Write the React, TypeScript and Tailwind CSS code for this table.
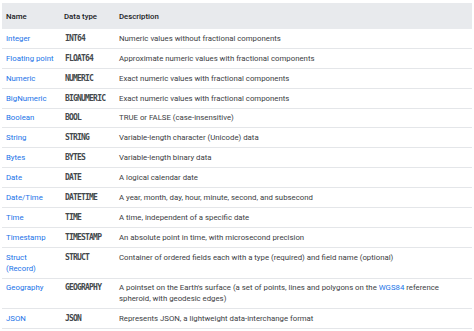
const rows: { name: string[]; type: string; desc: React.ReactNode }[] = [
  { name: ['Integer'], type: 'INT64', desc: 'Numeric values without fractional components' },
  { name: ['Floating point'], type: 'FLOAT64', desc: 'Approximate numeric values with fractional components' },
  { name: ['Numeric'], type: 'NUMERIC', desc: 'Exact numeric values with fractional components' },
  { name: ['BigNumeric'], type: 'BIGNUMERIC', desc: 'Exact numeric values with fractional components' },
  { name: ['Boolean'], type: 'BOOL', desc: 'TRUE or FALSE (case-insensitive)' },
  { name: ['String'], type: 'STRING', desc: 'Variable-length character (Unicode) data' },
  { name: ['Bytes'], type: 'BYTES', desc: 'Variable-length binary data' },
  { name: ['Date'], type: 'DATE', desc: 'A logical calendar date' },
  { name: ['Date/Time'], type: 'DATETIME', desc: 'A year, month, day, hour, minute, second, and subsecond' },
  { name: ['Time'], type: 'TIME', desc: 'A time, independent of a specific date' },
  { name: ['Timestamp'], type: 'TIMESTAMP', desc: 'An absolute point in time, with microsecond precision' },
  {
    name: ['Struct', '(Record)'],
    type: 'STRUCT',
    desc: 'Container of ordered fields each with a type (required) and field name (optional)',
  },
  {
    name: ['Geography'],
    type: 'GEOGRAPHY',
    desc: (
      <>
        A pointset on the Earth's surface (a set of points, lines and polygons on the{' '}
        <a className="text-[#1a73e8]">WGS84</a> reference spheroid, with geodesic edges)
      </>
    ),
  },
  { name: ['JSON'], type: 'JSON', desc: 'Represents JSON, a lightweight data-interchange format' },
]

export default function App() {
  return (
    <div className="w-[474px] h-[331px] bg-white pt-[3px] pl-[2px] overflow-hidden font-['Roboto',sans-serif] text-[7.8px] leading-[11px] text-[#3c4043]">
      <table className="w-[470px] border-collapse table-fixed">
        <colgroup>
          <col className="w-[62px]" />
          <col className="w-[55px]" />
          <col />
        </colgroup>
        <thead>
          <tr className="bg-[#e8eaed] h-[26px]">
            <th className="text-left font-medium text-[#202124] pl-[4px] align-middle">Name</th>
            <th className="text-left font-medium text-[#202124] align-middle">Data type</th>
            <th className="text-left font-medium text-[#202124] align-middle">Description</th>
          </tr>
        </thead>
        <tbody>
          {rows.map((r) => (
            <tr key={r.type} className="border-b border-[#e4e6e9]">
              <td className="pl-[4px] py-[3.95px] align-top text-[#1a73e8]">
                {r.name.map((n) => (
                  <div key={n}>{n}</div>
                ))}
              </td>
              <td className="pl-[1px] py-[3.95px] align-top font-['DejaVu_Sans_Mono',monospace] font-bold text-[8px] tracking-[-0.8px] leading-[11px] text-[#45494e]">
                {r.type}
              </td>
              <td className="py-[3.95px] pr-[30px] align-top">{r.desc}</td>
            </tr>
          ))}
        </tbody>
      </table>
    </div>
  )
}
